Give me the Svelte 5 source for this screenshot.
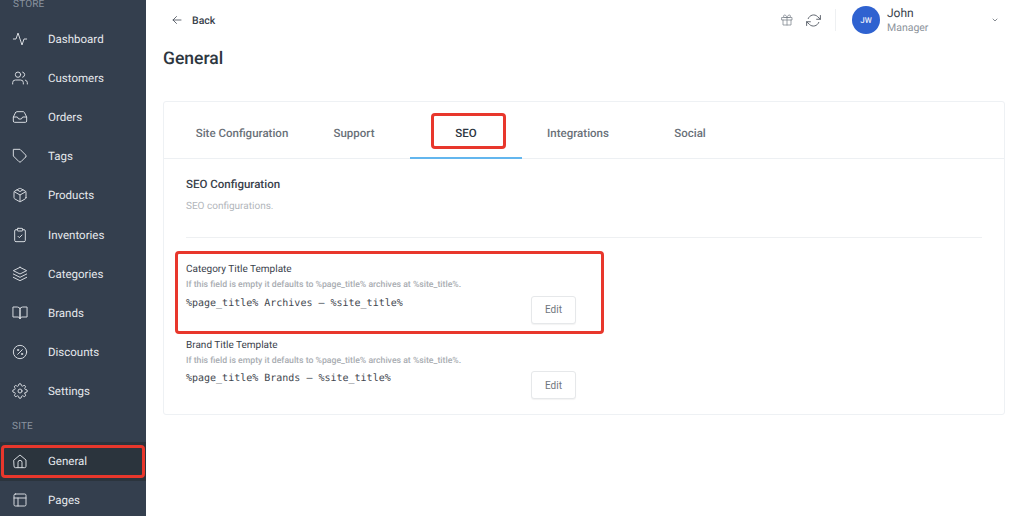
<script>
  const icons = {
    activity: '<polyline points="22 12 18 12 15 21 9 3 6 12 2 12"/>',
    users: '<path d="M17 21v-2a4 4 0 0 0-4-4H5a4 4 0 0 0-4 4v2"/><circle cx="9" cy="7" r="4"/><path d="M23 21v-2a4 4 0 0 0-3-3.87"/><path d="M16 3.13a4 4 0 0 1 0 7.75"/>',
    inbox: '<polyline points="22 12 16 12 14 15 10 15 8 12 2 12"/><path d="M5.45 5.11L2 12v6a2 2 0 0 0 2 2h16a2 2 0 0 0 2-2v-6l-3.45-6.89A2 2 0 0 0 16.76 4H7.24a2 2 0 0 0-1.79 1.11z"/>',
    tag: '<path d="M20.59 13.41l-7.17 7.17a2 2 0 0 1-2.83 0L2 12V2h10l8.59 8.59a2 2 0 0 1 0 2.82z"/>',
    box: '<path d="M21 16V8a2 2 0 0 0-1-1.73l-7-4a2 2 0 0 0-2 0l-7 4A2 2 0 0 0 3 8v8a2 2 0 0 0 1 1.73l7 4a2 2 0 0 0 2 0l7-4A2 2 0 0 0 21 16z"/><polyline points="7.5 4.21 12 6.81 16.5 4.21"/><polyline points="3.27 6.96 12 12.01 20.73 6.96"/><line x1="12" y1="22.08" x2="12" y2="12"/>',
    clipboard: '<path d="M16 4h2a2 2 0 0 1 2 2v14a2 2 0 0 1-2 2H6a2 2 0 0 1-2-2V6a2 2 0 0 1 2-2h2"/><rect x="8" y="2" width="8" height="4" rx="1"/><polyline points="9 14 11 16 15 12"/>',
    layers: '<polygon points="12 2 2 7 12 12 22 7 12 2"/><polyline points="2 17 12 22 22 17"/><polyline points="2 12 12 17 22 12"/>',
    book: '<path d="M2 3h6a4 4 0 0 1 4 4v14a3 3 0 0 0-3-3H2z"/><path d="M22 3h-6a4 4 0 0 0-4 4v14a3 3 0 0 1 3-3h7z"/>',
    percent: '<circle cx="12" cy="12" r="10"/><line x1="15.5" y1="8.5" x2="8.5" y2="15.5"/><circle cx="9" cy="9" r="1"/><circle cx="15" cy="15" r="1"/>',
    settings: '<circle cx="12" cy="12" r="3"/><path d="M19.4 15a1.65 1.65 0 0 0 .33 1.82l.06.06a2 2 0 1 1-2.83 2.83l-.06-.06a1.65 1.65 0 0 0-2.82 1.17V21a2 2 0 1 1-4 0v-.09A1.65 1.65 0 0 0 7.27 19.74l-.06.06a2 2 0 1 1-2.83-2.83l.06-.06a1.65 1.65 0 0 0-1.17-2.82H3a2 2 0 1 1 0-4h.09A1.65 1.65 0 0 0 4.26 7.27l-.06-.06a2 2 0 1 1 2.83-2.83l.06.06a1.65 1.65 0 0 0 2.82-1.17V3a2 2 0 1 1 4 0v.09a1.65 1.65 0 0 0 2.82 1.17l.06-.06a2 2 0 1 1 2.83 2.83l-.06.06a1.65 1.65 0 0 0 1.17 2.82H21a2 2 0 1 1 0 4h-.09A1.65 1.65 0 0 0 19.4 15z"/>',
    home: '<path d="M3 10.5L12 3l9 7.5V20a2 2 0 0 1-2 2H5a2 2 0 0 1-2-2z"/><path d="M9 22v-8a3 3 0 0 1 6 0v8"/>',
    layout: '<rect x="3" y="3" width="18" height="18" rx="2"/><line x1="3" y1="9" x2="21" y2="9"/><line x1="9" y1="21" x2="9" y2="9"/>'
  };
  const store = [
    ['Dashboard', 'activity'], ['Customers', 'users'], ['Orders', 'inbox'], ['Tags', 'tag'],
    ['Products', 'box'], ['Inventories', 'clipboard'], ['Categories', 'layers'], ['Brands', 'book'],
    ['Discounts', 'percent'], ['Settings', 'settings']
  ];
  const tabs = ['Site Configuration', 'Support', 'SEO', 'Integrations', 'Social'];
  const hint = 'If this field is empty it defaults to %page_title% archives at %site_title%.';
</script>

<div class="page">
  <aside class="side">
    <div class="label store">STORE</div>
    {#each store as [name, icon]}
      <div class="item">
        <svg class="ico" viewBox="0 0 24 24">{@html icons[icon]}</svg>
        <span>{name}</span>
      </div>
    {/each}
    <div class="label site">SITE</div>
    <div class="item active">
      <svg class="ico" viewBox="0 0 24 24">{@html icons.home}</svg>
      <span>General</span>
      <div class="mark sidemark"></div>
    </div>
    <div class="item">
      <svg class="ico" viewBox="0 0 24 24">{@html icons.layout}</svg>
      <span>Pages</span>
    </div>
  </aside>

  <main class="main">
    <header class="top">
      <div class="back">
        <svg class="arrow" viewBox="0 0 24 24"><line x1="20" y1="12" x2="4" y2="12"/><polyline points="11 19 4 12 11 5"/></svg>
        <span>Back</span>
      </div>
      <div class="tools">
        <svg class="gift" viewBox="0 0 24 24"><polyline points="20 12 20 22 4 22 4 12"/><rect x="2" y="7" width="20" height="5"/><line x1="12" y1="22" x2="12" y2="7"/><path d="M12 7H7.5a2.5 2.5 0 0 1 0-5C11 2 12 7 12 7z"/><path d="M12 7h4.5a2.5 2.5 0 0 0 0-5C13 2 12 7 12 7z"/></svg>
        <svg class="refresh" viewBox="0 0 24 24"><polyline points="23 4 23 10 17 10"/><polyline points="1 20 1 14 7 14"/><path d="M3.51 9a9 9 0 0 1 14.85-3.36L23 10M1 14l4.64 4.36A9 9 0 0 0 20.49 15"/></svg>
        <div class="divider"></div>
        <div class="avatar">JW</div>
        <div class="who">
          <div class="name">John</div>
          <div class="role">Manager</div>
        </div>
        <svg class="chev" viewBox="0 0 24 24"><polyline points="6 9 12 15 18 9"/></svg>
      </div>
    </header>

    <h1>General</h1>

    <section class="card">
      <nav class="tabs">
        {#each tabs as t}
          <div class="tab" class:on={t === 'SEO'}>
            {t}
            {#if t === 'SEO'}<div class="mark tabmark"></div>{/if}
          </div>
        {/each}
      </nav>
      <div class="body">
        <h2>SEO Configuration</h2>
        <p class="sub">SEO configurations.</p>
        <hr />
        <div class="field first">
          <div class="mark fieldmark"></div>
          <div class="ftitle">Category Title Template</div>
          <div class="hint">{hint}</div>
          <div class="row">
            <code>%page_title% Archives – %site_title%</code>
            <button>Edit</button>
          </div>
        </div>
        <div class="field">
          <div class="ftitle">Brand Title Template</div>
          <div class="hint">{hint}</div>
          <div class="row">
            <code>%page_title% Brands – %site_title%</code>
            <button>Edit</button>
          </div>
        </div>
      </div>
    </section>
  </main>
</div>

<style>
  :global(body) { margin: 0; background: #fff; }
  .page {
    display: grid;
    grid-template-columns: 146px 1fr;
    width: 1010px;
    height: 516px;
    overflow: hidden;
    font-family: Roboto, "Liberation Sans", sans-serif;
    text-rendering: geometricPrecision;
  }
  .side {
    background: #343f4e;
    color: #e6e9ed;
    height: 516px;
    overflow: hidden;
  }
  .label {
    font-size: 10px;
    line-height: 14px;
    color: #8a939f;
    letter-spacing: 0.2px;
  }
  .store { padding-left: 13px; margin-top: -2px; height: 21px; }
  .site { padding-left: 12px; margin-top: 9.4px; height: 21.4px; }
  .item {
    position: relative;
    display: flex;
    align-items: center;
    height: 39.2px;
    padding-left: 12px;
    font-size: 11.5px;
    box-sizing: border-box;
  }
  .item span { margin-left: 20px; }
  .ico {
    width: 16px;
    height: 16px;
    flex: none;
    fill: none;
    stroke: #d5d9de;
    stroke-width: 1.5;
    stroke-linecap: round;
    stroke-linejoin: round;
  }
  .active { background: #2b343d; }
  .mark {
    position: absolute;
    border: 3px solid #e8372c;
    border-radius: 4px;
    box-sizing: border-box;
    pointer-events: none;
  }
  .sidemark { left: 1px; top: 3.6px; width: 144px; height: 33px; }

  .main { min-width: 0; padding: 0 5px 0 17px; color: #2d3640; }
  .top {
    display: flex;
    align-items: center;
    justify-content: space-between;
    height: 40px;
  }
  .back {
    display: flex;
    align-items: center;
    gap: 9px;
    padding-left: 8px;
    font-size: 10.5px;
    font-weight: 500;
    color: #3a424c;
  }
  .arrow { width: 12px; height: 12px; fill: none; stroke: #4a525c; stroke-width: 1.7; stroke-linecap: round; stroke-linejoin: round; }
  .tools { display: flex; align-items: center; }
  .gift, .refresh, .chev { fill: none; stroke: #7c838c; stroke-width: 1.5; stroke-linecap: round; stroke-linejoin: round; }
  .gift { width: 12px; height: 12px; }
  .refresh { width: 15px; height: 15px; margin-left: 13px; stroke: #565d66; }
  .divider { width: 1px; height: 22px; background: #eef0f2; margin: 0 16px 0 14px; }
  .avatar {
    width: 28px;
    height: 28px;
    border-radius: 50%;
    background: #2f62d0;
    color: #e8eefb;
    font-size: 8px;
    font-weight: 500;
    display: flex;
    align-items: center;
    justify-content: center;
  }
  .who { width: 104px; margin-left: 7px; padding-top: 1px; }
  .name { font-size: 12px; line-height: 15px; color: #3a424c; }
  .role { font-size: 10.5px; line-height: 15px; color: #8c939b; margin-top: -1px; }
  .chev { width: 8px; height: 8px; margin-right: 6px; stroke: #5b626b; stroke-width: 2.2; }

  h1 {
    margin: 9px 0 19px;
    font-size: 17.5px;
    line-height: 20px;
    font-weight: 500;
    color: #2d3640;
    height: 33px;
  }
  .card {
    border: 1px solid #eef1f4;
    border-radius: 3px;
    height: 314px;
    box-sizing: border-box;
  }
  .tabs {
    display: flex;
    height: 57px;
    padding-left: 22px;
    border-bottom: 1px solid #edf0f3;
    box-sizing: border-box;
  }
  .tab {
    position: relative;
    width: 112px;
    padding-top: 5px;
    display: flex;
    align-items: center;
    justify-content: center;
    font-size: 11.5px;
    font-weight: 500;
    color: #6a7179;
    box-sizing: border-box;
  }
  .tab.on {
    color: #2d3640;
    border-bottom: 2.5px solid #63b6ee;
    height: 57px;
    padding-top: 7px;
  }
  .tabmark { left: 21px; top: 11px; width: 75px; height: 36px; }

  .body { padding: 17px 22px 0; }
  h2 {
    margin: 0;
    font-size: 11.5px;
    line-height: 16px;
    font-weight: 500;
    color: #3a424c;
  }
  .sub { margin: 7.5px 0 0; font-size: 10px; line-height: 14px; color: #b2b6bb; }
  hr { margin: 23.5px 0 0; border: 0; border-top: 1px solid #eef0f2; }
  .field { position: relative; height: 75.5px; }
  .first { margin-top: 25px; }
  .fieldmark { left: -11px; top: -12px; width: 429px; height: 83px; }
  .ftitle { font-size: 10px; line-height: 14px; color: #3a424c; }
  .hint { margin-top: 2px; font-size: 8.7px; line-height: 13px; font-weight: 500; color: #a8acb1; }
  .row { position: relative; }
  code {
    display: block;
    margin-top: 4.5px;
    font-family: "DejaVu Sans Mono", "Liberation Mono", monospace;
    font-size: 10px;
    line-height: 14px;
    color: #3f474f;
  }
  button {
    position: absolute;
    left: 345px;
    top: -1px;
    width: 45px;
    height: 28px;
    padding: 0;
    background: #fff;
    border: 1px solid #e6e8ea;
    border-radius: 3px;
    box-shadow: 0 1px 1px rgba(0, 0, 0, 0.05);
    font-family: inherit;
    font-size: 10px;
    color: #6f767d;
  }
</style>
